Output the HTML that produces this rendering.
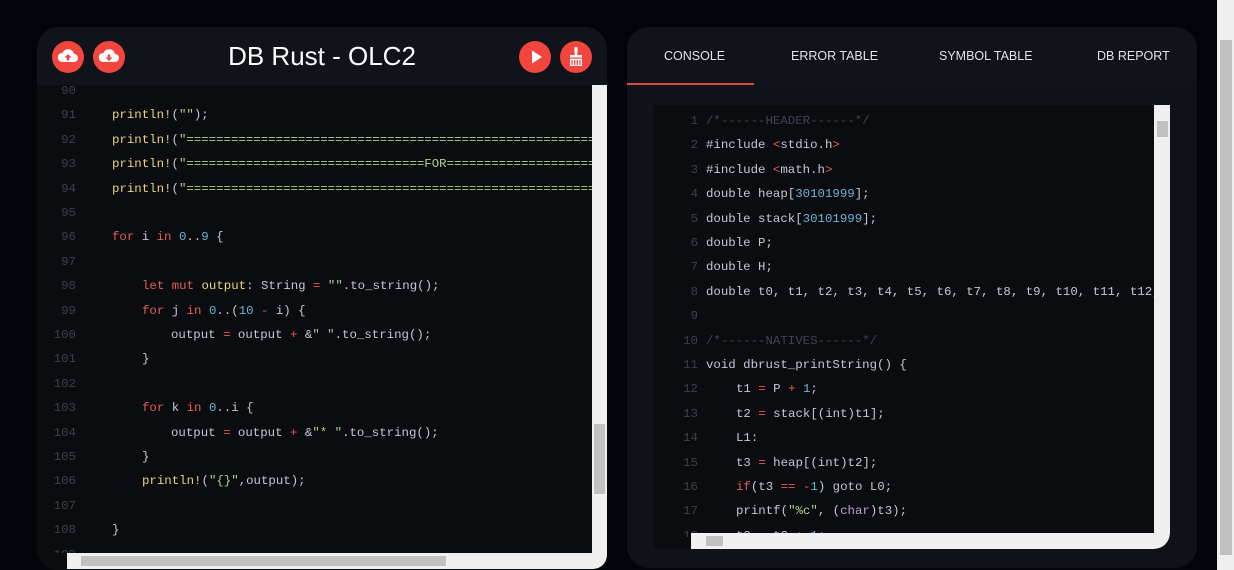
<!DOCTYPE html>
<html><head><meta charset="utf-8"><style>
*{margin:0;padding:0;box-sizing:border-box}
html,body{width:1234px;height:570px;overflow:hidden}
body{background:#02040a;position:relative;font-family:"Liberation Sans",sans-serif}
.panel{position:absolute;background:#10131a;border-radius:22px;overflow:hidden}
.code{position:absolute;background:#0b0c10;font-family:"Liberation Mono",monospace;font-size:12.4px;color:#c3c8d6;overflow:hidden}
.ln{position:absolute;white-space:pre;height:24.4px;line-height:24.4px}
.n{color:#3b404c;position:absolute;text-align:right}
.y{color:#e8d57c}.g{color:#a9d38a}.r{color:#e35d59}.b{color:#6cb6d8}.c{color:#3e4452}.p{color:#c39bd9}
.btn{position:absolute;width:32px;height:32px;border-radius:50%;background:#f1453d;top:14px}
.tab{position:absolute;font-size:12.5px;color:#dfe3ea}
.sb{position:absolute;background:#f0f0f0}
.th{position:absolute;background:#c1c1c1}
</style></head><body>
<div class="panel" style="left:37px;top:27px;width:570px;height:543px">
 <div class="btn" style="left:15px"><svg width="32" height="32" viewBox="0 0 32 32"><path d="M10 21h12a4 4 0 0 0 0-8 6 6 0 0 0-11.5-1A4.5 4.5 0 0 0 10 21z" fill="#fff"/><path d="M16 13l-3.5 3.5h2.3v3h2.4v-3h2.3z" fill="#f1453d"/></svg></div>
 <div class="btn" style="left:56px"><svg width="32" height="32" viewBox="0 0 32 32"><path d="M10 21h12a4 4 0 0 0 0-8 6 6 0 0 0-11.5-1A4.5 4.5 0 0 0 10 21z" fill="#fff"/><path d="M16 20l-3.5-3.5h2.3v-3h2.4v3h2.3z" fill="#f1453d"/></svg></div>
 <div style="position:absolute;left:0;width:570px;top:14px;text-align:center;color:#fff;font-size:26px">DB Rust - OLC2</div>
 <div class="btn" style="left:482px"><svg width="32" height="32" viewBox="0 0 32 32"><path d="M13 9.5v13l10-6.5z" fill="#fff"/></svg></div>
 <div class="btn" style="left:523px"><svg width="32" height="32" viewBox="0 0 32 32"><rect x="14.5" y="6" width="3" height="8" rx="1" fill="#fff"/><path d="M10 14h12v11H10z" fill="#fff"/><path d="M12 19v5M14.7 19v5M17.3 19v5M20 19v5" stroke="#f1453d" stroke-width="1.3"/><rect x="10" y="16.5" width="12" height="1.2" fill="#f1453d"/></svg></div>
</div>
<div class="code" style="left:37px;top:85px;width:570px;height:485px;border-bottom-right-radius:14px;border-bottom-left-radius:20px">
 <div style="position:absolute;top:-6px;left:0;width:555px;height:474px;overflow:hidden">
  <div class="ln" style="top:0"><span class="n" style="left:22px;width:17px">90</span></div>
  <div class="ln" style="top:24.4px"><span class="n" style="left:22px;width:17px">91</span><span style="position:absolute;left:75px"><span class="y">println!</span>(<span class="g">""</span>);</span></div>
  <div class="ln" style="top:48.8px"><span class="n" style="left:22px;width:17px">92</span><span style="position:absolute;left:75px"><span class="y">println!</span>(<span class="g">"============================================================</span></span></div>
  <div class="ln" style="top:73.2px"><span class="n" style="left:22px;width:17px">93</span><span style="position:absolute;left:75px"><span class="y">println!</span>(<span class="g">"================================FOR=========================</span></span></div>
  <div class="ln" style="top:97.6px"><span class="n" style="left:22px;width:17px">94</span><span style="position:absolute;left:75px"><span class="y">println!</span>(<span class="g">"============================================================</span></span></div>
  <div class="ln" style="top:122px"><span class="n" style="left:22px;width:17px">95</span></div>
  <div class="ln" style="top:146.4px"><span class="n" style="left:22px;width:17px">96</span><span style="position:absolute;left:75px"><span class="r">for</span> i <span class="r">in</span> <span class="b">0</span>..<span class="b">9</span> {</span></div>
  <div class="ln" style="top:170.8px"><span class="n" style="left:22px;width:17px">97</span></div>
  <div class="ln" style="top:195.2px"><span class="n" style="left:22px;width:17px">98</span><span style="position:absolute;left:105px"><span class="r">let</span> <span class="r">mut</span> <span class="y">output</span>: String <span class="r">=</span> <span class="g">""</span>.to_string();</span></div>
  <div class="ln" style="top:219.6px"><span class="n" style="left:22px;width:17px">99</span><span style="position:absolute;left:105px"><span class="r">for</span> j <span class="r">in</span> <span class="b">0</span>..(<span class="b">10</span> <span class="r">-</span> i) {</span></div>
  <div class="ln" style="top:244px"><span class="n" style="left:14px;width:25px">100</span><span style="position:absolute;left:134px">output <span class="r">=</span> output <span class="r">+</span> &amp;<span class="g">" "</span>.to_string();</span></div>
  <div class="ln" style="top:268.4px"><span class="n" style="left:14px;width:25px">101</span><span style="position:absolute;left:105px">}</span></div>
  <div class="ln" style="top:292.8px"><span class="n" style="left:14px;width:25px">102</span></div>
  <div class="ln" style="top:317.2px"><span class="n" style="left:14px;width:25px">103</span><span style="position:absolute;left:105px"><span class="r">for</span> k <span class="r">in</span> <span class="b">0</span>..i {</span></div>
  <div class="ln" style="top:341.6px"><span class="n" style="left:14px;width:25px">104</span><span style="position:absolute;left:134px">output <span class="r">=</span> output <span class="r">+</span> &amp;<span class="g">"* "</span>.to_string();</span></div>
  <div class="ln" style="top:366px"><span class="n" style="left:14px;width:25px">105</span><span style="position:absolute;left:105px">}</span></div>
  <div class="ln" style="top:390.4px"><span class="n" style="left:14px;width:25px">106</span><span style="position:absolute;left:105px"><span class="y">println!</span>(<span class="g">"{}"</span>,output);</span></div>
  <div class="ln" style="top:414.8px"><span class="n" style="left:14px;width:25px">107</span></div>
  <div class="ln" style="top:439.2px"><span class="n" style="left:14px;width:25px">108</span><span style="position:absolute;left:75px">}</span></div>
  <div class="ln" style="top:463.6px"><span class="n" style="left:14px;width:25px">109</span></div>
 </div>
 <div class="sb" style="left:555px;top:0;width:15px;height:468px"><div class="th" style="left:2px;top:339px;width:11px;height:70px"></div></div>
 <div class="sb" style="left:30px;top:468px;width:540px;height:16px;border-bottom-right-radius:14px"><div class="th" style="left:14px;top:3px;width:365px;height:10px"></div></div>
</div>
<div class="panel" style="left:627px;top:27px;width:570px;height:541px;background:#0f1218">
 <div style="position:absolute;left:0;top:0;width:570px;height:58px;background:#10131a"></div>
 <div class="tab" style="left:37px;top:22px">CONSOLE</div>
 <div class="tab" style="left:164px;top:22px">ERROR TABLE</div>
 <div class="tab" style="left:312px;top:22px">SYMBOL TABLE</div>
 <div class="tab" style="left:470px;top:22px">DB REPORT</div>
 <div style="position:absolute;left:0;top:56px;width:127px;height:2px;background:#e0444a"></div>
</div>
<div class="code" style="left:654px;top:105px;width:516px;height:444px;border-bottom-right-radius:16px">
 <div style="position:absolute;top:4px;left:0;width:500px;height:428px;overflow:hidden">
  <div class="ln" style="top:0"><span class="n" style="left:30px;width:14px">1</span><span style="position:absolute;left:52px" class="c">/*------HEADER------*/</span></div>
  <div class="ln" style="top:24.4px"><span class="n" style="left:30px;width:14px">2</span><span style="position:absolute;left:52px">#include <span class="r">&lt;</span>stdio.h<span class="r">&gt;</span></span></div>
  <div class="ln" style="top:48.8px"><span class="n" style="left:30px;width:14px">3</span><span style="position:absolute;left:52px">#include <span class="r">&lt;</span>math.h<span class="r">&gt;</span></span></div>
  <div class="ln" style="top:73.2px"><span class="n" style="left:30px;width:14px">4</span><span style="position:absolute;left:52px">double heap[<span class="b">30101999</span>];</span></div>
  <div class="ln" style="top:97.6px"><span class="n" style="left:30px;width:14px">5</span><span style="position:absolute;left:52px">double stack[<span class="b">30101999</span>];</span></div>
  <div class="ln" style="top:122px"><span class="n" style="left:30px;width:14px">6</span><span style="position:absolute;left:52px">double P;</span></div>
  <div class="ln" style="top:146.4px"><span class="n" style="left:30px;width:14px">7</span><span style="position:absolute;left:52px">double H;</span></div>
  <div class="ln" style="top:170.8px"><span class="n" style="left:30px;width:14px">8</span><span style="position:absolute;left:52px">double t0, t1, t2, t3, t4, t5, t6, t7, t8, t9, t10, t11, t12, t13</span></div>
  <div class="ln" style="top:195.2px"><span class="n" style="left:30px;width:14px">9</span></div>
  <div class="ln" style="top:219.6px"><span class="n" style="left:22px;width:22px">10</span><span style="position:absolute;left:52px" class="c">/*------NATIVES------*/</span></div>
  <div class="ln" style="top:244px"><span class="n" style="left:22px;width:22px">11</span><span style="position:absolute;left:52px">void dbrust_printString() {</span></div>
  <div class="ln" style="top:268.4px"><span class="n" style="left:22px;width:22px">12</span><span style="position:absolute;left:82px">t1 <span class="r">=</span> P <span class="r">+</span> <span class="b">1</span>;</span></div>
  <div class="ln" style="top:292.8px"><span class="n" style="left:22px;width:22px">13</span><span style="position:absolute;left:82px">t2 <span class="r">=</span> stack[(int)t1];</span></div>
  <div class="ln" style="top:317.2px"><span class="n" style="left:22px;width:22px">14</span><span style="position:absolute;left:82px">L1:</span></div>
  <div class="ln" style="top:341.6px"><span class="n" style="left:22px;width:22px">15</span><span style="position:absolute;left:82px">t3 <span class="r">=</span> heap[(int)t2];</span></div>
  <div class="ln" style="top:366px"><span class="n" style="left:22px;width:22px">16</span><span style="position:absolute;left:82px"><span class="r">if</span>(t3 <span class="r">==</span> <span class="r">-</span><span class="b">1</span>) goto L0;</span></div>
  <div class="ln" style="top:390.4px"><span class="n" style="left:22px;width:22px">17</span><span style="position:absolute;left:82px">printf(<span class="g">"%c"</span>, (<span class="p">char</span>)t3);</span></div>
  <div class="ln" style="top:414.8px"><span class="n" style="left:22px;width:22px">18</span><span style="position:absolute;left:82px">t2 <span class="r">=</span> t2 <span class="r">+</span> <span class="b">1</span>;</span></div>
 </div>
 <div class="sb" style="left:500px;top:0;width:16px;height:428px"><div class="th" style="left:3px;top:16px;width:11px;height:16px"></div></div>
 <div class="sb" style="left:37px;top:428px;width:479px;height:16px;border-bottom-right-radius:16px"><div class="th" style="left:15px;top:3px;width:17px;height:10px"></div></div>
</div>
<div style="position:absolute;left:1217px;top:0;width:17px;height:570px;background:#f0f0f0"><div style="position:absolute;left:3px;top:40px;width:12px;height:515px;background:#c1c1c1"></div></div>
</body></html>
